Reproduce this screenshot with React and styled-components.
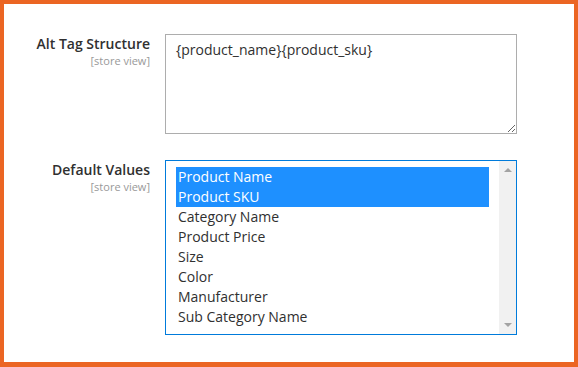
import React from 'react';
import styled, { createGlobalStyle } from 'styled-components';

const GlobalStyle = createGlobalStyle`
    html, body {
        margin: 0;
        padding: 0;
        background: #ffffff;
    }
    body {
        font-family: "Open Sans", "Liberation Sans", sans-serif;
        color: #303030;
    }
`;

const options = [
    { label: 'Product Name', selected: true },
    { label: 'Product SKU', selected: true },
    { label: 'Category Name' },
    { label: 'Product Price' },
    { label: 'Size' },
    { label: 'Color' },
    { label: 'Manufacturer' },
    { label: 'Sub Category Name' },
];

function App() {
    return (
        <>
            <GlobalStyle />
            <Frame>
                <Form>
                    <Label>
                        <span className="title">Alt Tag Structure</span>
                        <span className="scope">[store view]</span>
                    </Label>
                    <TextArea defaultValue="{product_name}{product_sku}" spellCheck={false} />

                    <Label>
                        <span className="title">Default Values</span>
                        <span className="scope">[store view]</span>
                    </Label>
                    <ListBox>
                        <OptionList>
                            {options.map((o) => (
                                <Option key={o.label} selected={o.selected}>
                                    {o.label}
                                </Option>
                            ))}
                        </OptionList>
                        <ScrollTrack>
                            <Arrow />
                            <Arrow down />
                        </ScrollTrack>
                    </ListBox>
                </Form>
            </Frame>
        </>
    );
}

const Frame = styled.div`
    box-sizing: border-box;
    width: 578px;
    height: 367px;
    border: 4px solid #eb6523;
    border-bottom-width: 5px;
    background: #ffffff;
    padding-top: 30px;
`;

const Form = styled.div`
    display: grid;
    grid-template-columns: 146px 352px;
    column-gap: 15px;
    row-gap: 26px;
    align-items: start;
`;

const Label = styled.div`
    display: flex;
    flex-direction: column;
    align-items: flex-end;
    text-align: right;

    .title {
        font-size: 14px;
        font-weight: 600;
        line-height: 20px;
        color: #303030;
    }
    .scope {
        font-size: 11px;
        line-height: 14px;
        color: #999999;
        margin-top: 0px;
    }
`;

const TextArea = styled.textarea`
    box-sizing: border-box;
    display: block;
    width: 352px;
    height: 100px;
    margin: 0;
    padding: 5px 10px;
    border: 1px solid #adadad;
    border-radius: 0;
    font-family: "Open Sans", "Liberation Sans", sans-serif;
    font-size: 14px;
    line-height: 20px;
    color: #303030;
    background: #ffffff;
    outline: none;
    resize: both;
`;

const ListBox = styled.div`
    box-sizing: border-box;
    display: flex;
    width: 352px;
    height: 175px;
    border: 1px solid #007bdb;
    background: #ffffff;
`;

const OptionList = styled.div`
    flex: 1;
    padding: 6px 10px 0 10px;
`;

const Option = styled.div`
    height: 20px;
    line-height: 20px;
    padding: 0 2px;
    font-size: 14px;
    white-space: nowrap;
    color: ${(p) => (p.selected ? '#ffffff' : '#303030')};
    background: ${(p) => (p.selected ? '#1e90ff' : 'transparent')};
`;

const ScrollTrack = styled.div`
    width: 17px;
    background: #f1f1f1;
    display: flex;
    flex-direction: column;
    justify-content: space-between;
    align-items: center;
    padding: 7px 0 7px;
`;

const Arrow = styled.span`
    width: 0;
    height: 0;
    border-left: 4px solid transparent;
    border-right: 4px solid transparent;
    ${(p) =>
        p.down
            ? 'border-top: 4px solid #a3a3a3;'
            : 'border-bottom: 4px solid #a3a3a3;'}
`;

export default App;
